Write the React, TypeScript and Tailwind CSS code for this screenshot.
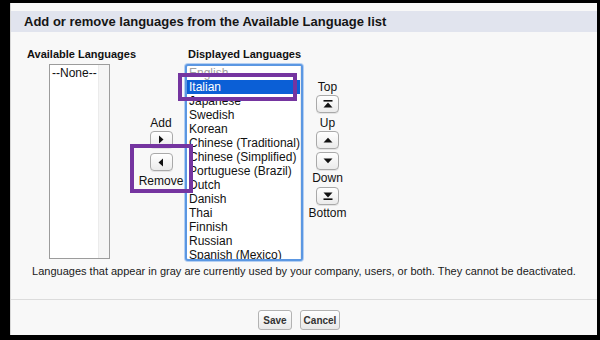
import React from "react";

const Tri = ({ dir, bar }: { dir: "up" | "down" | "left" | "right"; bar?: boolean }) => {
  if (dir === "left" || dir === "right") {
    return (
      <svg width="8" height="9" viewBox="0 0 8 9">
        {dir === "right" ? <polygon points="2,0.5 6.5,4.5 2,8.5" fill="#111" /> : <polygon points="6,0.5 1.5,4.5 6,8.5" fill="#111" />}
      </svg>
    );
  }
  return (
    <svg width="12" height="10" viewBox="0 0 12 10">
      {dir === "up" ? (
        <>
          {bar && <rect x="1.5" y="1" width="9" height="1.6" fill="#111" />}
          <polygon points={bar ? "1.5,8.5 6,3.6 10.5,8.5" : "1.5,7.5 6,2.8 10.5,7.5"} fill="#111" />
        </>
      ) : (
        <>
          <polygon points={bar ? "1.5,1.5 6,6.4 10.5,1.5" : "1.5,2.5 6,7.2 10.5,2.5"} fill="#111" />
          {bar && <rect x="1.5" y="7.4" width="9" height="1.6" fill="#111" />}
        </>
      )}
    </svg>
  );
};

const Btn = ({ children, h = "h-[18px]" }: { children: React.ReactNode; h?: string }) => (
  <div
    className={`w-[23px] ${h} rounded-[4px] border border-[#a9a9a9] bg-gradient-to-b from-white to-[#ebebeb] shadow-[0_1px_0_rgba(0,0,0,0.08)] flex items-center justify-center`}
  >
    {children}
  </div>
);

const displayed = [
  "English",
  "Italian",
  "Japanese",
  "Swedish",
  "Korean",
  "Chinese (Traditional)",
  "Chinese (Simplified)",
  "Portuguese (Brazil)",
  "Dutch",
  "Danish",
  "Thai",
  "Finnish",
  "Russian",
  "Spanish (Mexico)",
];

export default function App() {
  return (
    <div className="w-[600px] h-[340px] bg-black pt-[3px] pl-[10px] pr-[3px] pb-[5px] font-['Liberation_Sans',Arial,sans-serif] text-[#111]">
      <div className="h-full bg-[#f8f8f8] border-l border-[#d8d8d8] flex flex-col">
        <div className="h-[8px] shrink-0" />
        <div className="h-[21px] shrink-0 bg-[#e1e4ee] flex items-center pl-[13px] text-[13px] font-bold text-[#151515]">
          Add or remove languages from the Available Language list
        </div>

        <div className="relative shrink-0 flex items-start h-[229px]">
          {/* Available */}
          <div className="ml-[16px] w-[110px] pt-[15px] flex flex-col">
            <div className="text-[11px] font-bold leading-[14px] whitespace-nowrap">Available Languages</div>
            <div className="mt-[3px] ml-[22px] w-[61px] h-[195px] border border-[#9c9c9c] bg-white flex">
              <div className="flex-1 text-[12px] leading-[14px] pl-[2px] pt-[1px]">--None--</div>
              <div className="w-[11px] bg-[#f5f5f5] border-l border-[#ebebeb]" />
            </div>
          </div>

          {/* Add / Remove */}
          <div className="w-[48px] pt-[84px] flex flex-col items-center">
            <div className="text-[12px] leading-[14px]">Add</div>
            <div className="mt-[1px]">
              <Btn h="h-[17px]">
                <Tri dir="right" />
              </Btn>
            </div>
            <div className="mt-[5px]">
              <Btn h="h-[18px]">
                <Tri dir="left" />
              </Btn>
            </div>
            <div className="mt-[3px] text-[12px] leading-[14px]">Remove</div>
          </div>

          {/* Displayed */}
          <div className="w-[118px] pt-[15px] flex flex-col">
            <div className="pl-[3px] text-[11px] font-bold leading-[14px] whitespace-nowrap">Displayed Languages</div>
            <div className="mt-[3px] w-[118px] h-[197px] border-2 border-[#5b97e2] rounded-[3px] shadow-[0_0_0_1px_#b4cff2] bg-white flex overflow-hidden">
              <div className="flex-1 text-[12px] leading-[14px]">
                {displayed.map((l, i) => (
                  <div
                    key={l}
                    className={`h-[14px] pl-[2px] whitespace-nowrap ${
                      i === 0 ? "text-[#a0a0a0]" : i === 1 ? "bg-[#0b5fd6] text-white" : ""
                    }`}
                  >
                    {l}
                  </div>
                ))}
              </div>
              <div className="w-[11px] bg-[#f7f7f7] border-l border-[#ececec] pt-[2px] flex justify-center">
                <div className="w-[5px] h-[144px] rounded-full bg-[#bdbdbd]" />
              </div>
            </div>
          </div>

          {/* Ordering */}
          <div className="w-[49px] pt-[48px] flex flex-col items-center text-[12px] leading-[14px]">
            <div>Top</div>
            <div className="mt-[1px]">
              <Btn>
                <Tri dir="up" bar />
              </Btn>
            </div>
            <div className="mt-[3px]">Up</div>
            <div className="mt-[1px]">
              <Btn>
                <Tri dir="up" />
              </Btn>
            </div>
            <div className="mt-[3px]">
              <Btn>
                <Tri dir="down" />
              </Btn>
            </div>
            <div className="mt-[1px]">Down</div>
            <div className="mt-[2px]">
              <Btn>
                <Tri dir="down" bar />
              </Btn>
            </div>
            <div className="mt-[1px]">Bottom</div>
          </div>

          {/* annotation boxes */}
          <div className="absolute left-[167px] top-[41px] w-[119px] h-[28px] border-[4px] border-[#7535a0]" />
          <div className="absolute left-[119px] top-[112px] w-[63px] h-[49px] border-[4px] border-[#7535a0]" />
        </div>

        <div className="shrink-0 mt-[3px] text-center text-[11px] leading-[14px] text-[#1a1a1a] whitespace-nowrap">
          Languages that appear in gray are currently used by your company, users, or both. They cannot be deactivated.
        </div>

        <div className="mt-[21px] border-t border-[#dcdcdc] flex-1 flex justify-center items-start pt-[10px] pr-[10px] gap-[8px]">
          <div className="h-[20px] w-[34px] rounded-[3px] border border-[#b3b3b3] bg-gradient-to-b from-white to-[#e8e8e8] text-[10px] font-bold text-[#333] flex items-center justify-center">
            Save
          </div>
          <div className="h-[20px] w-[40px] rounded-[3px] border border-[#b3b3b3] bg-gradient-to-b from-white to-[#e8e8e8] text-[10px] font-bold text-[#333] flex items-center justify-center">
            Cancel
          </div>
        </div>
      </div>
    </div>
  );
}
